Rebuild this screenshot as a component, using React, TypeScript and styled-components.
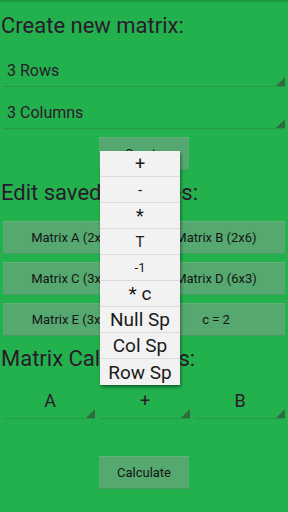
import React from 'react';
import styled, { createGlobalStyle } from 'styled-components';

const GlobalStyle = createGlobalStyle`
  html, body {
    margin: 0;
    padding: 0;
    background: #22b14c;
  }
  * {
    box-sizing: border-box;
  }
`;

const operations = ['+', '-', '*', 'T', '-1', '* c', 'Null Sp', 'Col Sp', 'Row Sp'];
const small: Record<string, number> = { '-': 15, '*': 18, T: 15, '-1': 13, '+': 18 };

const matrices = ['Matrix A (2x3)', 'Matrix B (2x6)', 'Matrix C (3x3)', 'Matrix D (6x3)', 'Matrix E (3x3)', 'c = 2'];

const App = () => {
  return (
    <Page>
      <GlobalStyle />
      <Heading>Create new matrix:</Heading>
      <Spinner>3 Rows</Spinner>
      <Spinner>3 Columns</Spinner>
      <ActionButton $top={8}>Create</ActionButton>

      <Heading $top={10}>Edit saved matrices:</Heading>
      <MatrixGrid>
        {matrices.map((m) => (
          <MatrixButton key={m}>{m}</MatrixButton>
        ))}
      </MatrixGrid>

      <Heading $top={10}>Matrix Calculations:</Heading>
      <CalcRow>
        <CalcSpinner>A</CalcSpinner>
        <CalcSpinner>+</CalcSpinner>
        <CalcSpinner>B</CalcSpinner>
      </CalcRow>
      <ActionButton $top={37}>Calculate</ActionButton>

      {/* open operation dropdown */}
      <Menu>
        {operations.map((op) => (
          <MenuItem key={op} $size={small[op] ?? 19}>
            {op}
          </MenuItem>
        ))}
      </Menu>
    </Page>
  );
};

const Page = styled.div`
  position: relative;
  width: 288px;
  height: 512px;
  padding: 0 3px;
  background: #22b14c;
  border-top: 2px solid #1c9a40;
  font-family: Roboto, 'Liberation Sans', sans-serif;
  color: #2b1a2d;
  overflow: hidden;
`;

const Heading = styled.h1<{ $top?: number }>`
  margin: ${(p) => p.$top ?? 11}px 0 0 -2px;
  font-size: 22px;
  font-weight: 400;
  line-height: 26px;
  color: #2b1a2d;
`;

const Spinner = styled.div`
  position: relative;
  display: flex;
  align-items: flex-end;
  height: 42px;
  padding: 0 0 6px 4px;
  border-bottom: 1px solid #2b9548;
  font-size: 16px;
  line-height: 19px;
  &:first-of-type {
    margin-top: 6px;
  }
  &::after {
    content: '';
    position: absolute;
    right: 0;
    bottom: 0;
    width: 0;
    height: 0;
    border-left: 9px solid transparent;
    border-bottom: 9px solid #2f6a40;
  }
`;

const ActionButton = styled.button<{ $top: number }>`
  display: block;
  width: 90px;
  height: 33px;
  margin: ${(p) => p.$top}px auto 0;
  padding: 0;
  border: none;
  border-top: 1px solid #62b27a;
  border-bottom: 1px solid #489a5e;
  background: #55a86f;
  font-family: Roboto, 'Liberation Sans', sans-serif;
  font-size: 13px;
  color: #141414;
`;

const MatrixGrid = styled.div`
  display: grid;
  grid-template-columns: 1fr 1fr;
  column-gap: 6px;
  row-gap: 8px;
  margin-top: 15px;
`;

const MatrixButton = styled.button`
  height: 33px;
  padding: 0;
  border: none;
  border-top: 1px solid #62b27a;
  border-bottom: 1px solid #489a5e;
  background: #55a86f;
  font-family: Roboto, 'Liberation Sans', sans-serif;
  font-size: 13px;
  color: #141414;
`;

const CalcRow = styled.div`
  display: grid;
  grid-template-columns: repeat(3, 1fr);
  gap: 5px;
  margin-top: 6px;
  padding-left: 2px;
`;

const CalcSpinner = styled.div`
  position: relative;
  display: flex;
  align-items: flex-end;
  justify-content: center;
  height: 41px;
  padding-bottom: 7px;
  border-bottom: 1px solid #2b9548;
  font-size: 18px;
  line-height: 21px;
  &::after {
    content: '';
    position: absolute;
    right: 0;
    bottom: 0;
    width: 0;
    height: 0;
    border-left: 9px solid transparent;
    border-bottom: 9px solid #2f6a40;
  }
`;

const Menu = styled.div`
  position: absolute;
  left: 100px;
  top: 149px;
  width: 80px;
  background: #f2f2f2;
  box-shadow: 1px 2px 3px rgba(0, 0, 0, 0.45);
`;

const MenuItem = styled.div<{ $size: number }>`
  display: flex;
  align-items: center;
  justify-content: center;
  height: 26px;
  border-bottom: 1px solid #dadada;
  font-size: ${(p) => p.$size}px;
  color: #1a1a1a;
  &:last-child {
    border-bottom: none;
  }
`;

export default App;
